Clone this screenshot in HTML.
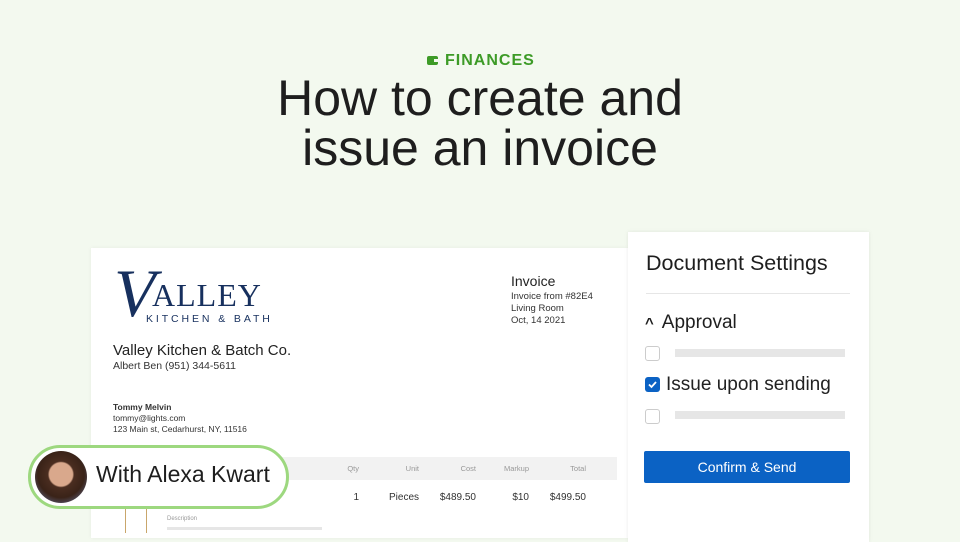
<!DOCTYPE html>
<html><head><style>
*{margin:0;padding:0;box-sizing:border-box}
body{width:960px;height:533px;overflow:hidden;background:#f3f9ef;font-family:"Liberation Sans",sans-serif;position:relative;color:#222}
.a{position:absolute}
.t{white-space:nowrap}
.r{position:absolute;text-align:right;width:60px}
</style></head><body>
<div class="a t" style="left:427px;top:52px;color:#3d9b27;font-weight:bold;font-size:16px;letter-spacing:1px">
<svg width="12" height="11" style="vertical-align:-1px;margin-right:6px"><rect x="0" y="1" width="11" height="9" rx="2" fill="#3d9b27"/><rect x="7" y="4" width="5" height="3" fill="#f3f9ef"/></svg>FINANCES</div>
<div class="a" style="left:0;width:960px;top:73px;text-align:center;font-size:50px;line-height:50px;color:#1e1e1e">How to create and<br>issue an invoice</div>

<div class="a" style="left:91px;top:248px;width:537px;height:290px;background:#fff;box-shadow:0 0 4px rgba(0,0,0,.05)"></div>
<div class="a t" style="left:112px;top:266px;font-family:'Liberation Serif',serif;color:#17305e">
<span style="font-size:68px;font-style:italic;position:absolute;left:2px;top:-12px">V</span>
<span style="font-size:32px;position:absolute;left:40px;top:11px;letter-spacing:1px">ALLEY</span>
<span style="font-family:'Liberation Sans';font-size:10.5px;letter-spacing:2.9px;position:absolute;left:34px;top:47px">KITCHEN &amp; BATH</span></div>
<div class="a t" style="left:113px;top:342px;font-size:15px">Valley Kitchen &amp; Batch Co.</div>
<div class="a t" style="left:113px;top:360px;font-size:10.5px;color:#333">Albert Ben (951) 344-5611</div>
<div class="a t" style="left:113px;top:402px;font-size:8.5px;line-height:11px;color:#333"><b>Tommy Melvin</b><br>tommy@lights.com<br>123 Main st, Cedarhurst, NY, 11516</div>
<div class="a t" style="left:511px;top:273px;font-size:14px">Invoice</div>
<div class="a t" style="left:511px;top:291px;font-size:9.5px;line-height:12px;color:#333">Invoice from #82E4<br>Living Room<br>Oct, 14 2021</div>
<div class="a" style="left:280px;top:457px;width:337px;height:23px;background:#f2f2f2"></div>
<div class="a t" style="top:464px;left:0;font-size:7.5px;color:#999">
<span class="r" style="left:299px">Qty</span><span class="r" style="left:359px">Unit</span><span class="r" style="left:416px">Cost</span><span class="r" style="left:469px">Markup</span><span class="r" style="left:526px">Total</span></div>
<div class="a t" style="top:492px;left:0;font-size:10px;color:#333">
<span class="r" style="left:299px">1</span><span class="r" style="left:359px">Pieces</span><span class="r" style="left:416px">$489.50</span><span class="r" style="left:469px">$10</span><span class="r" style="left:526px">$499.50</span></div>
<div class="a t" style="left:167px;top:516px;font-size:6px;color:#999">Description</div>
<div class="a" style="left:167px;top:527px;width:155px;height:3px;background:#e6e6e6"></div>
<div class="a" style="left:125px;top:508px;width:22px;height:25px;border-left:1.5px solid #c9a66b;border-right:1.5px solid #c9a66b"></div>

<div class="a" style="left:628px;top:232px;width:241px;height:310px;background:#fff;box-shadow:0 0 4px rgba(0,0,0,.08)"></div>
<div class="a t" style="left:646px;top:251px;font-size:21.5px;color:#1e1e1e">Document Settings</div>
<div class="a" style="left:646px;top:293px;width:204px;height:1px;background:#e6e6e6"></div>
<div class="a t" style="left:645px;top:312px;font-size:19px;color:#1e1e1e"><span style="font-size:15px;font-weight:bold;margin-right:8px">^</span>Approval</div>
<div class="a" style="left:645px;top:346px;width:15px;height:15px;border:1px solid #ccc;border-radius:3px"></div>
<div class="a" style="left:675px;top:349px;width:170px;height:8px;background:#e6e6e6"></div>
<div class="a" style="left:645px;top:377px;width:15px;height:15px;background:#0b62c4;border-radius:3px"><svg width="15" height="15"><path d="M4 7.5l2.5 2.5 4.5-5" stroke="#fff" stroke-width="1.8" fill="none"/></svg></div>
<div class="a t" style="left:666px;top:374px;font-size:19px;color:#222">Issue upon sending</div>
<div class="a" style="left:645px;top:409px;width:15px;height:15px;border:1px solid #ccc;border-radius:3px"></div>
<div class="a" style="left:675px;top:411px;width:170px;height:8px;background:#e6e6e6"></div>
<div class="a" style="left:644px;top:451px;width:206px;height:32px;background:#0b62c4;border-radius:2px;color:#fff;font-size:14px;text-align:center;line-height:32px">Confirm &amp; Send</div>

<div class="a" style="left:28px;top:445px;width:261px;height:64px;background:#fff;border:3px solid #9dd87f;border-radius:32px"></div>
<div class="a" style="left:35px;top:451px;width:52px;height:52px;border-radius:50%;background:radial-gradient(circle at 50% 45%,#d9a88c 0 30%,#4a2d20 34%,#3a2318 60%,#6b7fb0 100%)"></div>
<div class="a t" style="left:96px;top:461px;font-size:23px;color:#1e1e1e">With Alexa Kwart</div>
</body></html>
